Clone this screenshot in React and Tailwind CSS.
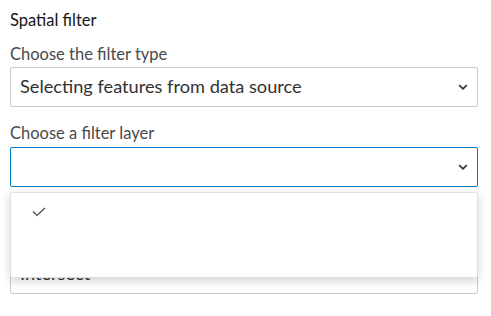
import React from 'react';

const Chevron = () => (
  <svg width="10" height="6" viewBox="0 0 10 6" className="text-[#323232]">
    <path d="M1.2 1.2l3.8 3.6 3.8-3.6" fill="none" stroke="currentColor" strokeWidth="1.7" />
  </svg>
);

const App = () => {
  return (
    <div className="w-[491px] h-[316px] bg-white overflow-hidden font-['Lato',sans-serif] text-[#323232]">
      <div className="px-[10px] pt-[10px] w-[488px]">
        <p className="text-[16.5px] leading-[20px] text-[#151515]">Spatial filter</p>

        <p className="mt-[14px] text-[16.5px] leading-[20px] text-[#4a4a4a]">Choose the filter type</p>
        <div className="mt-[3px] h-[40px] border border-[#cacaca] rounded-[2px] flex items-center justify-between pl-[9px] pr-[9px]">
          <span className="text-[18.2px] text-[#323232]">Selecting features from data source</span>
          <Chevron />
        </div>

        <p className="mt-[16px] text-[16.5px] leading-[20px] text-[#4a4a4a]">Choose a filter layer</p>
        <div className="relative mt-[4px]">
          <div className="h-[40px] border border-[#007ac2] rounded-[2px] flex items-center justify-end pr-[9px]">
            <Chevron />
          </div>

          {/* open menu */}
          <div className="absolute left-0 right-0 top-[45px] h-[86px] bg-white border border-[#dedede] rounded-[2px] shadow-[0_3px_10px_rgba(0,0,0,0.18)] z-10">
            <svg width="14" height="10" viewBox="0 0 14 10" className="absolute left-[21px] top-[14px]">
              <path d="M1 4.5l4 4L13 1" fill="none" stroke="#4a4a4a" strokeWidth="1.2" />
            </svg>
          </div>
        </div>

        <p className="mt-[18px] text-[16.5px] leading-[20px] text-[#4a4a4a]">Choose the spatial relationship</p>
        <div className="mt-[29px] h-[40px] border border-[#cacaca] rounded-[2px] flex items-center pl-[9px] pr-[9px]">
          <span className="text-[18.2px] text-[#323232]">Intersect</span>
        </div>
      </div>
    </div>
  );
};

export default App;
